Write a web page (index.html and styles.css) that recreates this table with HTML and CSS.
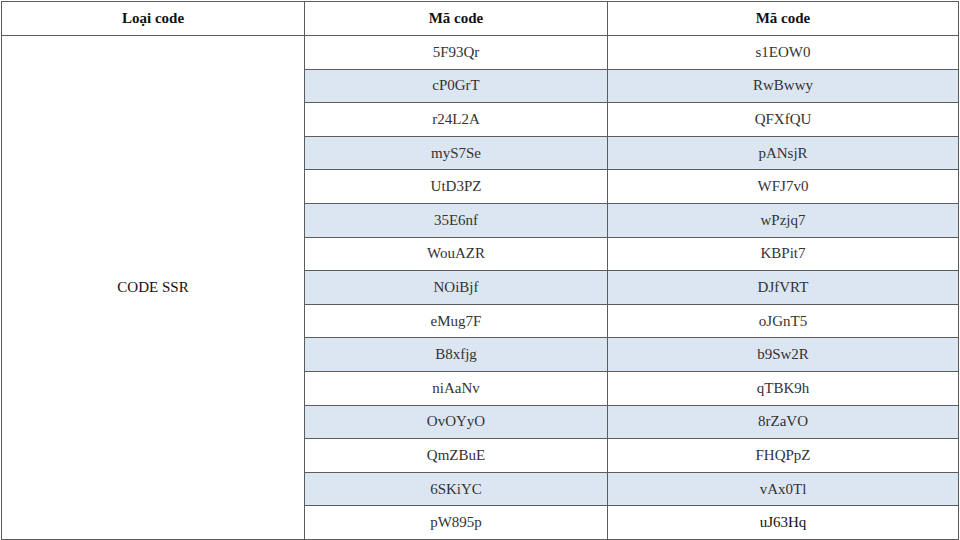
FILE: index.html
```html
<!DOCTYPE html>
<html lang="vi">
<head>
<meta charset="utf-8">
<title>Code SSR</title>
<link rel="stylesheet" href="styles.css">
</head>
<body>
<table class="codes">
  <colgroup>
    <col class="c1"><col class="c2"><col class="c3">
  </colgroup>
  <thead>
    <tr class="head"><th>Loại code</th><th>Mã code</th><th>Mã code</th></tr>
  </thead>
  <tbody>
    <tr><td class="type" rowspan="15">CODE SSR</td><td>5F93Qr</td><td>s1EOW0</td></tr>
    <tr class="alt"><td>cP0GrT</td><td>RwBwwy</td></tr>
    <tr><td>r24L2A</td><td>QFXfQU</td></tr>
    <tr class="alt"><td>myS7Se</td><td>pANsjR</td></tr>
    <tr><td>UtD3PZ</td><td>WFJ7v0</td></tr>
    <tr class="alt"><td>35E6nf</td><td>wPzjq7</td></tr>
    <tr><td>WouAZR</td><td>KBPit7</td></tr>
    <tr class="alt"><td>NOiBjf</td><td>DJfVRT</td></tr>
    <tr><td>eMug7F</td><td>oJGnT5</td></tr>
    <tr class="alt"><td>B8xfjg</td><td>b9Sw2R</td></tr>
    <tr><td>niAaNv</td><td>qTBK9h</td></tr>
    <tr class="alt"><td>OvOYyO</td><td>8rZaVO</td></tr>
    <tr><td>QmZBuE</td><td>FHQPpZ</td></tr>
    <tr class="alt"><td>6SKiYC</td><td>vAx0Tl</td></tr>
    <tr><td>pW895p</td><td class="dark">uJ63Hq</td></tr>
  </tbody>
</table>
</body>
</html>
```
FILE: styles.css
```css
html, body {
  margin: 0;
  padding: 0;
  background: #ffffff;
}
body {
  padding: 1px 0 0 1px;
  font-family: "Liberation Serif", "Times New Roman", serif;
}
.codes {
  border-collapse: collapse;
  width: 957px;
  table-layout: fixed;
  font-size: 15px;
  color: #333333;
}
.c1 { width: 303px; }
.c2 { width: 303px; }
.c3 { width: 351px; }
.codes th, .codes td {
  border: 1.5px solid #5c5c5c;
  text-align: center;
  padding: 0;
  vertical-align: middle;
}
.codes th {
  font-weight: bold;
  color: #111111;
  font-size: 15px;
}
.head { height: 34px; }
.codes tbody tr { height: 33.6px; }
.codes tbody tr.alt td { background: #dce6f2; }
.codes td.type { background: #ffffff; color: #111111; }
.codes td.dark { color: #111111; }
```
